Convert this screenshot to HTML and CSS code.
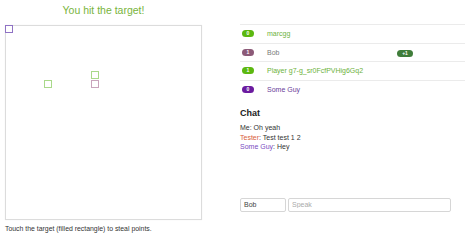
FILE: index.html
```html
<!DOCTYPE html>
<html>
<head>
<meta charset="utf-8">
<link rel="stylesheet" href="styles.css">
</head>
<body>
<div class="page">
  <div class="game">
    <div class="status">You hit the target!</div>
    <div class="board">
      <div class="sq sq-purple" style="left:-1px;top:-1px"></div>
      <div class="sq sq-green" style="left:38px;top:54px"></div>
      <div class="sq sq-green" style="left:85px;top:45px"></div>
      <div class="sq sq-pink" style="left:85px;top:54px"></div>
    </div>
    <div class="hint">Touch the target (filled rectangle) to steal points.</div>
  </div>
  <div class="side">
    <ul class="players">
      <li class="player"><span class="badge b-green">0</span><span class="name n-green">marcgg</span></li>
      <li class="player"><span class="badge b-mauve">1</span><span class="name n-gray">Bob</span><span class="plus">+1</span></li>
      <li class="player"><span class="badge b-green">1</span><span class="name n-green">Player g7-g_sr0FcfPVHig6Gq2</span></li>
      <li class="player"><span class="badge b-purple">0</span><span class="name n-purple">Some Guy</span></li>
    </ul>
    <h2 class="chat-title">Chat</h2>
    <div class="messages">
      <div class="msg"><span class="who">Me</span>: Oh yeah</div>
      <div class="msg"><span class="who w-red">Tester</span>: Test test 1 2</div>
      <div class="msg"><span class="who w-purple">Some Guy</span>: Hey</div>
    </div>
    <form class="composer">
      <input class="field nick" type="text" value="Bob">
      <input class="field speak" type="text" placeholder="Speak">
    </form>
  </div>
</div>
</body>
</html>
```
FILE: styles.css
```css
* { box-sizing: border-box; }
html, body { margin: 0; padding: 0; background: #fff; }
body {
  font-family: "Liberation Sans", Arial, Helvetica, sans-serif;
  color: #333;
  width: 474px;
  height: 248px;
  overflow: hidden;
}
.page {
  display: flex;
  align-items: flex-start;
}
.game {
  width: 197px;
  margin-left: 5px;
  display: flex;
  flex-direction: column;
}
.status {
  height: 25px;
  padding-top: 4px;
  text-align: center;
  color: #78b43c;
  font-size: 10.5px;
  line-height: 13px;
}
.board {
  position: relative;
  height: 195px;
  border: 1px solid #dcdcdc;
  box-shadow: 0 0 1px rgba(0,0,0,0.08);
}
.sq {
  position: absolute;
  width: 8px;
  height: 8px;
  border: 1px solid;
}
.sq-purple { border-color: #8f72c4; }
.sq-green { border-color: #a9d98a; }
.sq-pink { border-color: #c9a5bc; }
.hint {
  margin-top: 4px;
  font-size: 6.9px;
  line-height: 9px;
  color: #333;
  white-space: nowrap;
}
.side {
  margin-left: 38px;
  width: 225px;
  display: flex;
  flex-direction: column;
}
.players {
  list-style: none;
  margin: 24px 0 0 0;
  padding: 0;
}
.player {
  height: 18.6px;
  border-top: 1px solid #ebebeb;
  display: flex;
  align-items: center;
  font-size: 7px;
  position: relative;
}
.badge {
  width: 12px;
  height: 7px;
  border-radius: 4px;
  margin-left: 2px;
  color: #fff;
  font-size: 5px;
  font-weight: bold;
  line-height: 7px;
  text-align: center;
}
.b-green { background: #5cb810; }
.b-mauve { background: #8c5a78; }
.b-purple { background: #6b1b9f; }
.name { margin-left: 13px; }
.n-green { color: #6db23b; }
.n-gray { color: #7a7a7a; }
.n-purple { color: #6a3c99; }
.plus {
  position: absolute;
  left: 157px;
  top: 6px;
  width: 16px;
  height: 7px;
  border-radius: 4px;
  background: #3f7d3a;
  color: #fff;
  font-size: 5px;
  font-weight: bold;
  line-height: 7px;
  text-align: center;
}
.chat-title {
  margin: 9px 0 0 0;
  font-size: 9px;
  line-height: 12px;
  font-weight: bold;
  color: #222;
}
.messages {
  margin-top: 4px;
  font-size: 7px;
  line-height: 9.5px;
  color: #333;
}
.w-red { color: #d9603b; }
.w-purple { color: #7a4cc2; }
.composer {
  margin: 46px 0 0 0;
  display: flex;
  gap: 2px;
}
.field {
  height: 14px;
  border: 1px solid #d6d6d6;
  border-radius: 2px;
  padding: 0 3px;
  font-family: "Liberation Sans", Arial, sans-serif;
  font-size: 7px;
  color: #444;
  outline: none;
  margin: 0;
}
.field::placeholder { color: #aaa; }
.nick { width: 46px; }
.speak { width: 163px; }
```
